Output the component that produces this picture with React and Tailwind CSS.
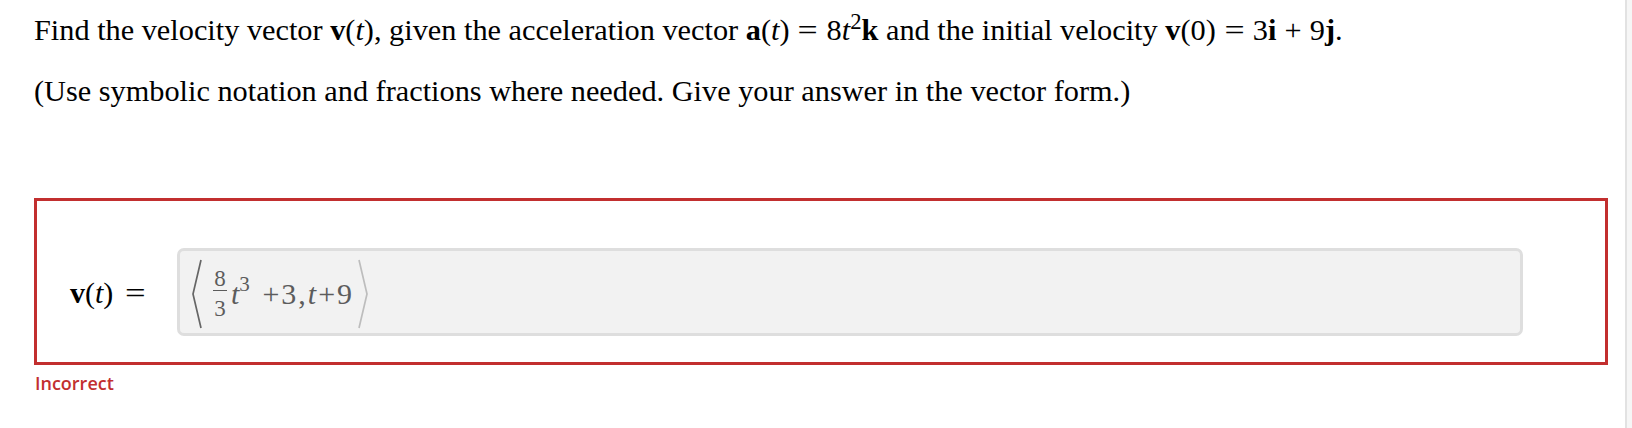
import React from "react";

const serif = { fontFamily: '"Liberation Serif", "Times New Roman", serif' };

function Eq() {
  return <span className="mx-[0.33em] inline-block scale-x-[1.18]">=</span>;
}

function Plus() {
  return <span className="mx-[0.27em]">+</span>;
}

function Bracket({ color, flip }) {
  return (
    <svg width="12" height="70" viewBox="0 0 12 70" className="shrink-0 block">
      <polyline
        points={flip ? "2,1 10,35 2,69" : "10,1 2,35 10,69"}
        fill="none"
        stroke={color}
        strokeWidth="1.7"
      />
    </svg>
  );
}

export default function App() {
  return (
    <div className="flex w-[1632px] h-[428px] bg-white overflow-hidden">
      <div className="flex-1 flex flex-col">
        <div className="pl-[34px] pt-[12px] text-[30.3px] leading-[36px] text-black" style={serif}>
          <p>
            Find the velocity vector <b>v</b>(<i>t</i>), given the acceleration vector <b>a</b>(<i>t</i>)
            <Eq />8<i>t</i><sup>2</sup><b>k</b> and the initial velocity <b>v</b>(0)
            <Eq />3<b>i</b>
            <Plus />9<b>j</b>.
          </p>
          <p className="mt-[25px]">
            (Use symbolic notation and fractions where needed. Give your answer in the vector form.)
          </p>
        </div>

        <div className="ml-[34px] mr-[17px] mt-[89px] h-[167px] border-[3px] border-[#c22f2f] flex items-start pt-[47px]">
          <div className="w-[140px] pl-[33px] h-[88px] flex items-center text-[30px] text-black" style={serif}>
            <span>
              <b>v</b>(<i>t</i>)<span className="ml-[0.38em] inline-block scale-x-[1.22] origin-left">=</span>
            </span>
          </div>
          <div className="flex-1 mr-[82px] h-[88px] rounded-[7px] border-[3px] border-[#dedede] bg-[#f2f2f2] flex items-center pl-[11px] pt-[3px]">
            <div className="flex items-center text-[#5c5c5c]" style={serif}>
              <Bracket color="#666666" />
              <div className="flex flex-col items-center ml-[10px] text-[23px] leading-none">
                <span>8</span>
                <span className="w-[14px] h-[1.5px] bg-[#5c5c5c]"></span>
                <span className="pt-[6px]">3</span>
              </div>
              <span className="text-[30px] leading-none ml-[4px] whitespace-nowrap">
                <i>t</i>
                <sup className="text-[21px] -top-[0.6em]">3</sup>
                <span className="ml-[0.42em] tracking-[2px]">
                  +3,<i>t</i>+9
                </span>
              </span>
              <span className="ml-[3px]">
                <Bracket color="#bdbdbd" flip />
              </span>
            </div>
          </div>
        </div>

        <div
          className="ml-[35px] mt-[9px] text-[18px] leading-none font-semibold text-[#c22f2f]"
          style={{ fontFamily: '"Open Sans", "Liberation Sans", sans-serif' }}
        >
          Incorrect
        </div>
      </div>
      <div className="w-[7px] h-full border-l-2 border-[#e2e2e2] bg-[#f6f6f6]"></div>
    </div>
  );
}
